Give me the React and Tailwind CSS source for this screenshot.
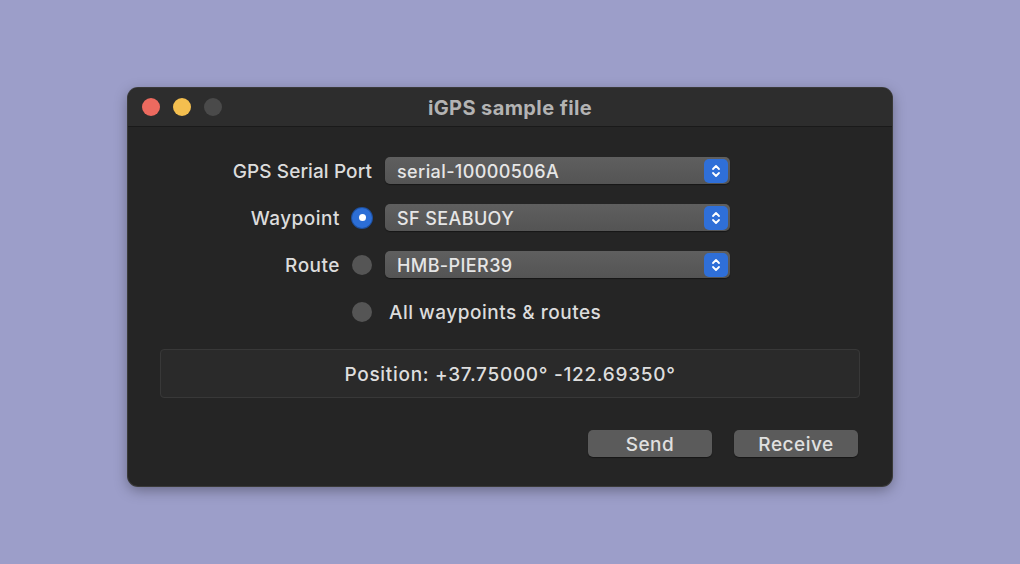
import React from 'react';

const font = { fontFamily: 'Inter, "Liberation Sans", sans-serif' };

const Stepper = () => (
  <div className="flex h-[24px] w-[24px] items-center justify-center rounded-[5px] bg-[#2f6fd8]">
    <svg width="10" height="16" viewBox="0 0 10 16" fill="none" stroke="white" strokeWidth="1.8" strokeLinecap="round" strokeLinejoin="round">
      <path d="M2 6 L5 3 L8 6" />
      <path d="M2 10 L5 13 L8 10" />
    </svg>
  </div>
);

const PopUp = ({ value }) => (
  <div className="flex h-[27px] w-[345px] items-center justify-between rounded-[5px] bg-gradient-to-b from-[#5f5f5f] to-[#545454] pl-[12px] pr-[2px] shadow-[0_1px_1px_rgba(0,0,0,0.4)]">
    <span className="pt-[1px] text-[18px] font-medium tracking-[0.4px] text-[#e6e6e6]">{value}</span>
    <Stepper />
  </div>
);

const Radio = ({ checked }) =>
  checked ? (
    <div className="flex h-[20px] w-[20px] items-center justify-center rounded-full bg-[#2c6ed6] shadow-[0_0_0_1px_#1d4f9e]">
      <div className="h-[7px] w-[7px] rounded-full bg-white" />
    </div>
  ) : (
    <div className="h-[20px] w-[20px] rounded-full bg-[#555555]" />
  );

const Label = ({ children, wide }) => (
  <span className={`pt-[3px] text-[19px] font-medium text-[#dcdcdc] ${wide ? 'tracking-[0.5px]' : 'tracking-[0.1px]'}`}>
    {children}
  </span>
);

export default function App() {
  return (
    <div className="flex h-[564px] w-full items-start bg-[#9c9ec9] pl-[128px] pt-[88px]" style={font}>
      <div className="flex h-[398px] w-[764px] flex-col overflow-hidden rounded-[10px] bg-[#252525] shadow-[0_0_0_1px_#3a3a3a,0_4px_14px_rgba(0,0,0,0.35)]">
        {/* title bar */}
        <div className="relative flex h-[39px] items-center border-b border-[#1a1a1a] bg-[#2d2d2d] px-[14px]">
          <div className="flex gap-[13px]">
            <div className="h-[18px] w-[18px] rounded-full bg-[#ec6a5f]" />
            <div className="h-[18px] w-[18px] rounded-full bg-[#f4bf4f]" />
            <div className="h-[18px] w-[18px] rounded-full bg-[#4a4a4a]" />
          </div>
          <div className="absolute inset-0 flex items-center justify-center pt-[2px] text-[20px] font-bold tracking-[0.4px] text-[#b3b3b3]">
            iGPS sample file
          </div>
        </div>

        {/* form */}
        <div className="grid grid-cols-[244px_345px] gap-x-[13px] gap-y-[20px] pt-[30px]">
          <div className="flex h-[27px] items-center justify-end">
            <Label>GPS Serial Port</Label>
          </div>
          <PopUp value="serial-10000506A" />

          <div className="flex h-[27px] items-center justify-end gap-[12px]">
            <Label wide>Waypoint</Label>
            <Radio checked />
          </div>
          <PopUp value="SF SEABUOY" />

          <div className="flex h-[27px] items-center justify-end gap-[12px]">
            <Label wide>Route</Label>
            <Radio />
          </div>
          <PopUp value="HMB-PIER39" />

          <div className="flex h-[27px] items-center justify-end">
            <Radio />
          </div>
          <div className="flex h-[27px] items-center pl-[4px]">
            <Label wide>All waypoints &amp; routes</Label>
          </div>
        </div>

        {/* position */}
        <div className="mx-[32px] mt-[24px] flex h-[49px] items-center justify-center rounded-[4px] border border-[#383838] bg-[#2a2a2a] pt-[4px]">
          <span className="text-[19px] font-medium tracking-[0.7px] text-[#dedede]">
            Position: +37.75000° -122.69350°
          </span>
        </div>

        {/* buttons */}
        <div className="mt-[32px] flex justify-end gap-[22px] pr-[34px]">
          <button className="h-[27px] w-[124px] rounded-[5px] bg-[#5b5b5b] pt-[1px] text-[19px] font-medium tracking-[0.5px] text-[#e0e0e0] shadow-[0_1px_1px_rgba(0,0,0,0.4)]">
            Send
          </button>
          <button className="h-[27px] w-[124px] rounded-[5px] bg-[#5b5b5b] pt-[1px] text-[19px] font-medium tracking-[0.5px] text-[#e0e0e0] shadow-[0_1px_1px_rgba(0,0,0,0.4)]">
            Receive
          </button>
        </div>
      </div>
    </div>
  );
}
